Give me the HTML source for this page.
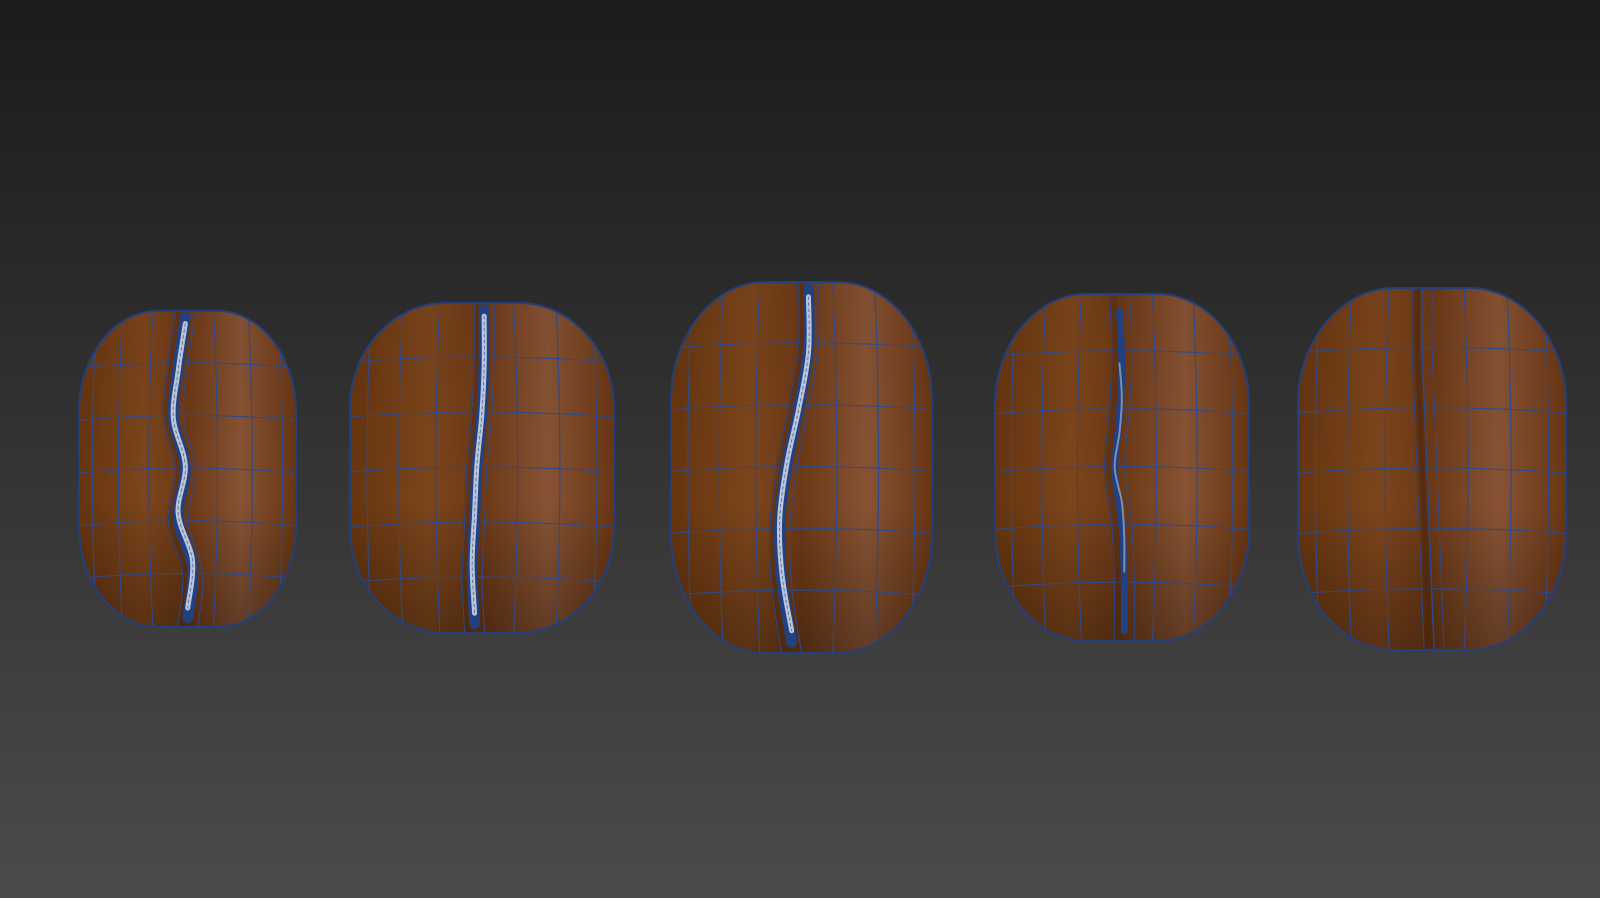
<!DOCTYPE html>
<html><head><meta charset="utf-8"><style>
html,body{margin:0;padding:0;width:1600px;height:898px;overflow:hidden;background:#2e2e2e}
svg{display:block}
</style></head><body>
<svg width="1600" height="898" viewBox="0 0 1600 898" xmlns="http://www.w3.org/2000/svg">
<defs>
<linearGradient id="bg" x1="0" y1="0" x2="0" y2="1">
<stop offset="0" stop-color="#1b1b1b"/><stop offset="0.5" stop-color="#333333"/><stop offset="1" stop-color="#4b4b4b"/>
</linearGradient>
<linearGradient id="bean" x1="0" y1="0" x2="1" y2="0">
<stop offset="0" stop-color="#66350f"/><stop offset="0.3" stop-color="#7c451c"/><stop offset="0.5" stop-color="#6c3916"/><stop offset="0.75" stop-color="#875334"/><stop offset="1" stop-color="#693613"/>
</linearGradient>
<linearGradient id="shade" x1="0" y1="0" x2="0" y2="1">
<stop offset="0" stop-color="#000" stop-opacity="0.05"/><stop offset="0.6" stop-color="#000" stop-opacity="0"/><stop offset="1" stop-color="#000" stop-opacity="0.28"/>
</linearGradient>
</defs>
<rect width="1600" height="898" fill="url(#bg)"/>
<g id="beans" stroke-linejoin="round" stroke-linecap="round">
</g>
</svg>
<script>
const beans=[
 {x:79,y:311,w:217,h:316,c:[0,-6,-10,0,-6,6,2],open:true},
 {x:350,y:303,w:264,h:330,c:[4,4,2,-2,-4,-6,-4],open:true},
 {x:671,y:282,w:261,h:371,c:[8,8,0,-10,-16,-14,-6],open:true},
 {x:995,y:294,w:254,h:347,c:[0,2,0,-4,2,4,4],open:false,thin:true},
 {x:1298,y:288,w:268,h:362,c:[-6,-6,-4,-2,0,2,4],open:false}
];
const NS="http://www.w3.org/2000/svg";
const g=document.getElementById('beans');
function el(t,a,p){const e=document.createElementNS(NS,t);for(const k in a)e.setAttribute(k,a[k]);(p||g).appendChild(e);return e;}
function smooth(p){let d=`M${p[0][0]},${p[0][1]}`;for(let i=0;i<p.length-1;i++){const p0=p[i-1]||p[i],p1=p[i],p2=p[i+1],p3=p[i+2]||p2;d+=` C${p1[0]+(p2[0]-p0[0])/6},${p1[1]+(p2[1]-p0[1])/6} ${p2[0]-(p3[0]-p1[0])/6},${p2[1]-(p3[1]-p1[1])/6} ${p2[0]},${p2[1]}`;}return d;}
beans.forEach((b,i)=>{
 const {x,y,w,h}=b;const rx=w*0.36,ry=h*0.32;const k=0.45;
 const d=`M${x+rx},${y} L${x+w-rx},${y} C${x+w-rx*k},${y} ${x+w},${y+ry*k} ${x+w},${y+ry} L${x+w},${y+h-ry} C${x+w},${y+h-ry*k} ${x+w-rx*k},${y+h} ${x+w-rx},${y+h} L${x+rx},${y+h} C${x+rx*k},${y+h} ${x},${y+h-ry*k} ${x},${y+h-ry} L${x},${y+ry} C${x},${y+ry*k} ${x+rx*k},${y} ${x+rx},${y} Z`;
 const cp=el('clipPath',{id:'c'+i});el('path',{d},cp);
 el('path',{d,fill:'url(#bean)'});
 const gg=el('g',{'clip-path':`url(#c${i})`});
 el('path',{d,fill:'url(#shade)'},gg);
 const n=6;
 for(let q=1;q<n;q++){const yy=y+h*q/n;el('path',{d:`M${x},${yy+4} Q${x+w/2},${yy-6} ${x+w},${yy+4}`,stroke:'#2c4a8c','stroke-width':1.1,fill:'none'},gg);}
 const vs=[0.08,0.2,0.34,0.62,0.78,0.92];
 vs.forEach(v=>{const xx=x+w*v;el('path',{d:`M${xx},${y} Q${xx+(v<0.5?-8:8)},${y+h/2} ${xx},${y+h}`,stroke:'#2c4a8c','stroke-width':1.1,fill:'none'},gg);});
 const cx=x+w*0.49;const c=b.c;
 const N=c.length-1;
 const P=(off,t0,t1)=>{let pts=[];for(let q=0;q<=N;q++){const t=q/N;pts.push([cx+c[q]*1.2+off,y+h*(t0+(t1-t0)*t)]);}return smooth(pts);};
 el('path',{d:P(-7,0,1),stroke:'#4a2208','stroke-width':8,fill:'none',opacity:0.35},gg);
 if(b.open){
  el('path',{d:P(0,0.02,0.97),stroke:'#23407f','stroke-width':11,fill:'none'},gg);
  el('path',{d:P(0,0.04,0.94),stroke:'#b9c5da','stroke-width':5,fill:'none'},gg);
  el('path',{d:P(0,0.04,0.94),stroke:'#4d6596','stroke-width':0.8,fill:'none','stroke-dasharray':'3 3'},gg);
 }else if(b.thin){
  el('path',{d:P(0,0.05,0.97),stroke:'#23407f','stroke-width':7,fill:'none'},gg);
  el('path',{d:P(0,0.2,0.8),stroke:'#7d8fb0','stroke-width':2,fill:'none'},gg);
 }else{
  el('path',{d:P(-3,0,1),stroke:'#4e2509','stroke-width':8,fill:'none',opacity:0.5},gg);
  el('path',{d:P(0,0,1),stroke:'#2c4a8c','stroke-width':1.5,fill:'none'},gg);
 }
 el('path',{d:P(-10,0,1),stroke:'#2c4a8c','stroke-width':1,fill:'none'},gg);
 el('path',{d:P(10,0,1),stroke:'#2c4a8c','stroke-width':1,fill:'none'},gg);
 el('path',{d,fill:'none',stroke:'#22407e','stroke-width':2});
});
</script>
</body></html>
